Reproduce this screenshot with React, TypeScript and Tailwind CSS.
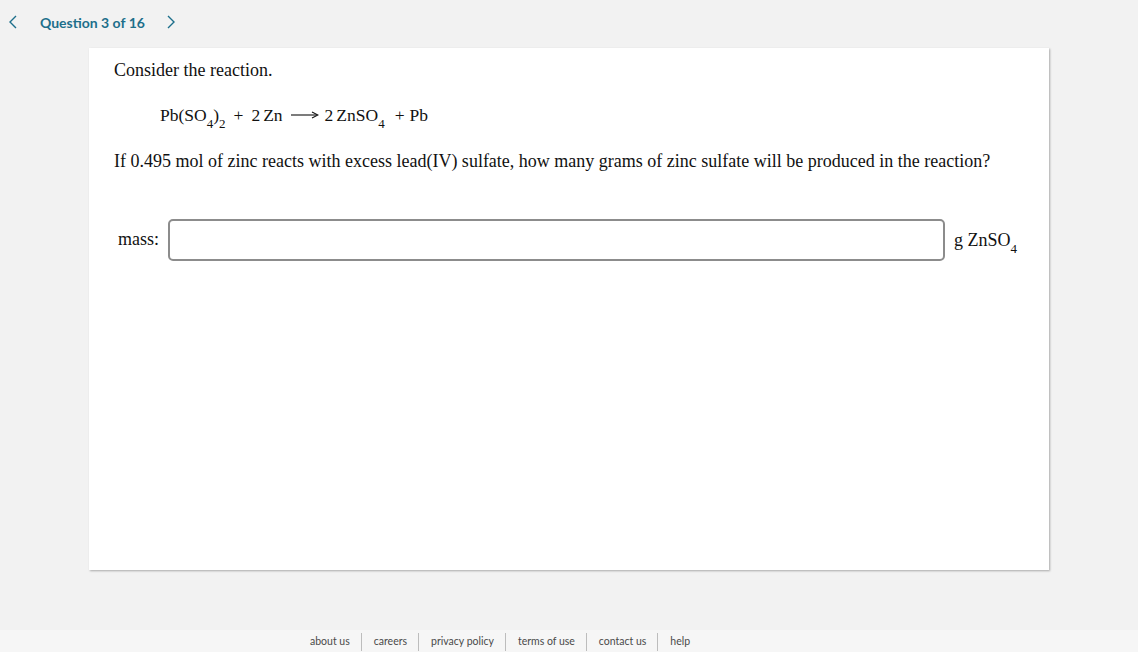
import React from "react";

const Sub = ({ children }: { children: React.ReactNode }) => (
  <sub className="text-[13px] relative top-[2px] align-sub leading-none">{children}</sub>
);

const links = ["about us", "careers", "privacy policy", "terms of use", "contact us", "help"];

export default function App() {
  return (
    <div className="w-[1138px] h-[655px] bg-[#f2f2f2] flex flex-col overflow-hidden">
      {/* question nav */}
      <div className="h-[48px] flex items-start pt-[14px] font-['Lato',sans-serif]">
        <button className="w-[26px] pl-[8px]">
          <svg width="10" height="16" viewBox="0 0 10 16" fill="none">
            <path d="M8 2 L2 8 L8 14" stroke="#1d6f8b" strokeWidth="1.4" />
          </svg>
        </button>
        <span className="ml-[14px] text-[14px] font-bold text-[#1d6f8b] leading-[18px]">
          Question 3 of 16
        </span>
        <button className="ml-[21px]">
          <svg width="10" height="16" viewBox="0 0 10 16" fill="none">
            <path d="M2 2 L8 8 L2 14" stroke="#1d6f8b" strokeWidth="1.4" />
          </svg>
        </button>
      </div>

      {/* card */}
      <div className="mx-auto w-[960px] h-[522px] bg-white shadow-[1px_1px_2px_rgba(0,0,0,0.3)] pl-[25px] pt-[10px] font-['Liberation_Serif',serif] text-[18px] text-[#111]">
        <p className="leading-[24px]">Consider the reaction.</p>
        <p className="mt-[21px] ml-[46px] text-[17.5px] leading-[24px] whitespace-nowrap flex items-baseline">
          <span>
            Pb(SO<Sub>4</Sub>)<Sub>2</Sub>
          </span>
          <span className="ml-[8px] mr-[8px]">+</span>
          <span>2</span>
          <span className="ml-[3px]">Zn</span>
          <svg className="ml-[8px] mr-[6px] self-center" width="28" height="10" viewBox="0 0 28 10" fill="none">
            <path d="M0 5 H26" stroke="#111" strokeWidth="1.1" />
            <path d="M21 2 L27 5 L21 8" stroke="#111" strokeWidth="1.1" fill="none" />
          </svg>
          <span>2</span>
          <span className="ml-[3px]">
            ZnSO<Sub>4</Sub>
          </span>
          <span className="ml-[10px] mr-[5px]">+</span>
          <span>Pb</span>
        </p>
        <p className="mt-[21px] leading-[24px]">
          If 0.495 mol of zinc reacts with excess lead(IV) sulfate, how many grams of zinc sulfate will be produced in the reaction?
        </p>
        <div className="mt-[46px] flex items-center">
          <span className="ml-[4px] w-[50px]">mass:</span>
          <input className="w-[777px] h-[42px] border-2 border-[#8c8c8c] rounded-[5px] outline-none" />
          <span className="ml-[9px] mt-[2px] whitespace-nowrap">
            g ZnSO<Sub>4</Sub>
          </span>
        </div>
      </div>

      {/* footer */}
      <div className="mt-[60px] h-[22px] bg-[#f6f6f6] flex items-center pt-[2px] pl-[310px] font-['Lato',sans-serif] text-[10.5px] text-[#4a4a4a]">
        {links.map((l, i) => (
          <React.Fragment key={l}>
            {i > 0 && <span className="ml-[11px] mr-[12px] w-px h-[18px] bg-[#bdbdbd]" />}
            <span>{l}</span>
          </React.Fragment>
        ))}
      </div>
      <div className="h-[3px] bg-white" />
    </div>
  );
}
